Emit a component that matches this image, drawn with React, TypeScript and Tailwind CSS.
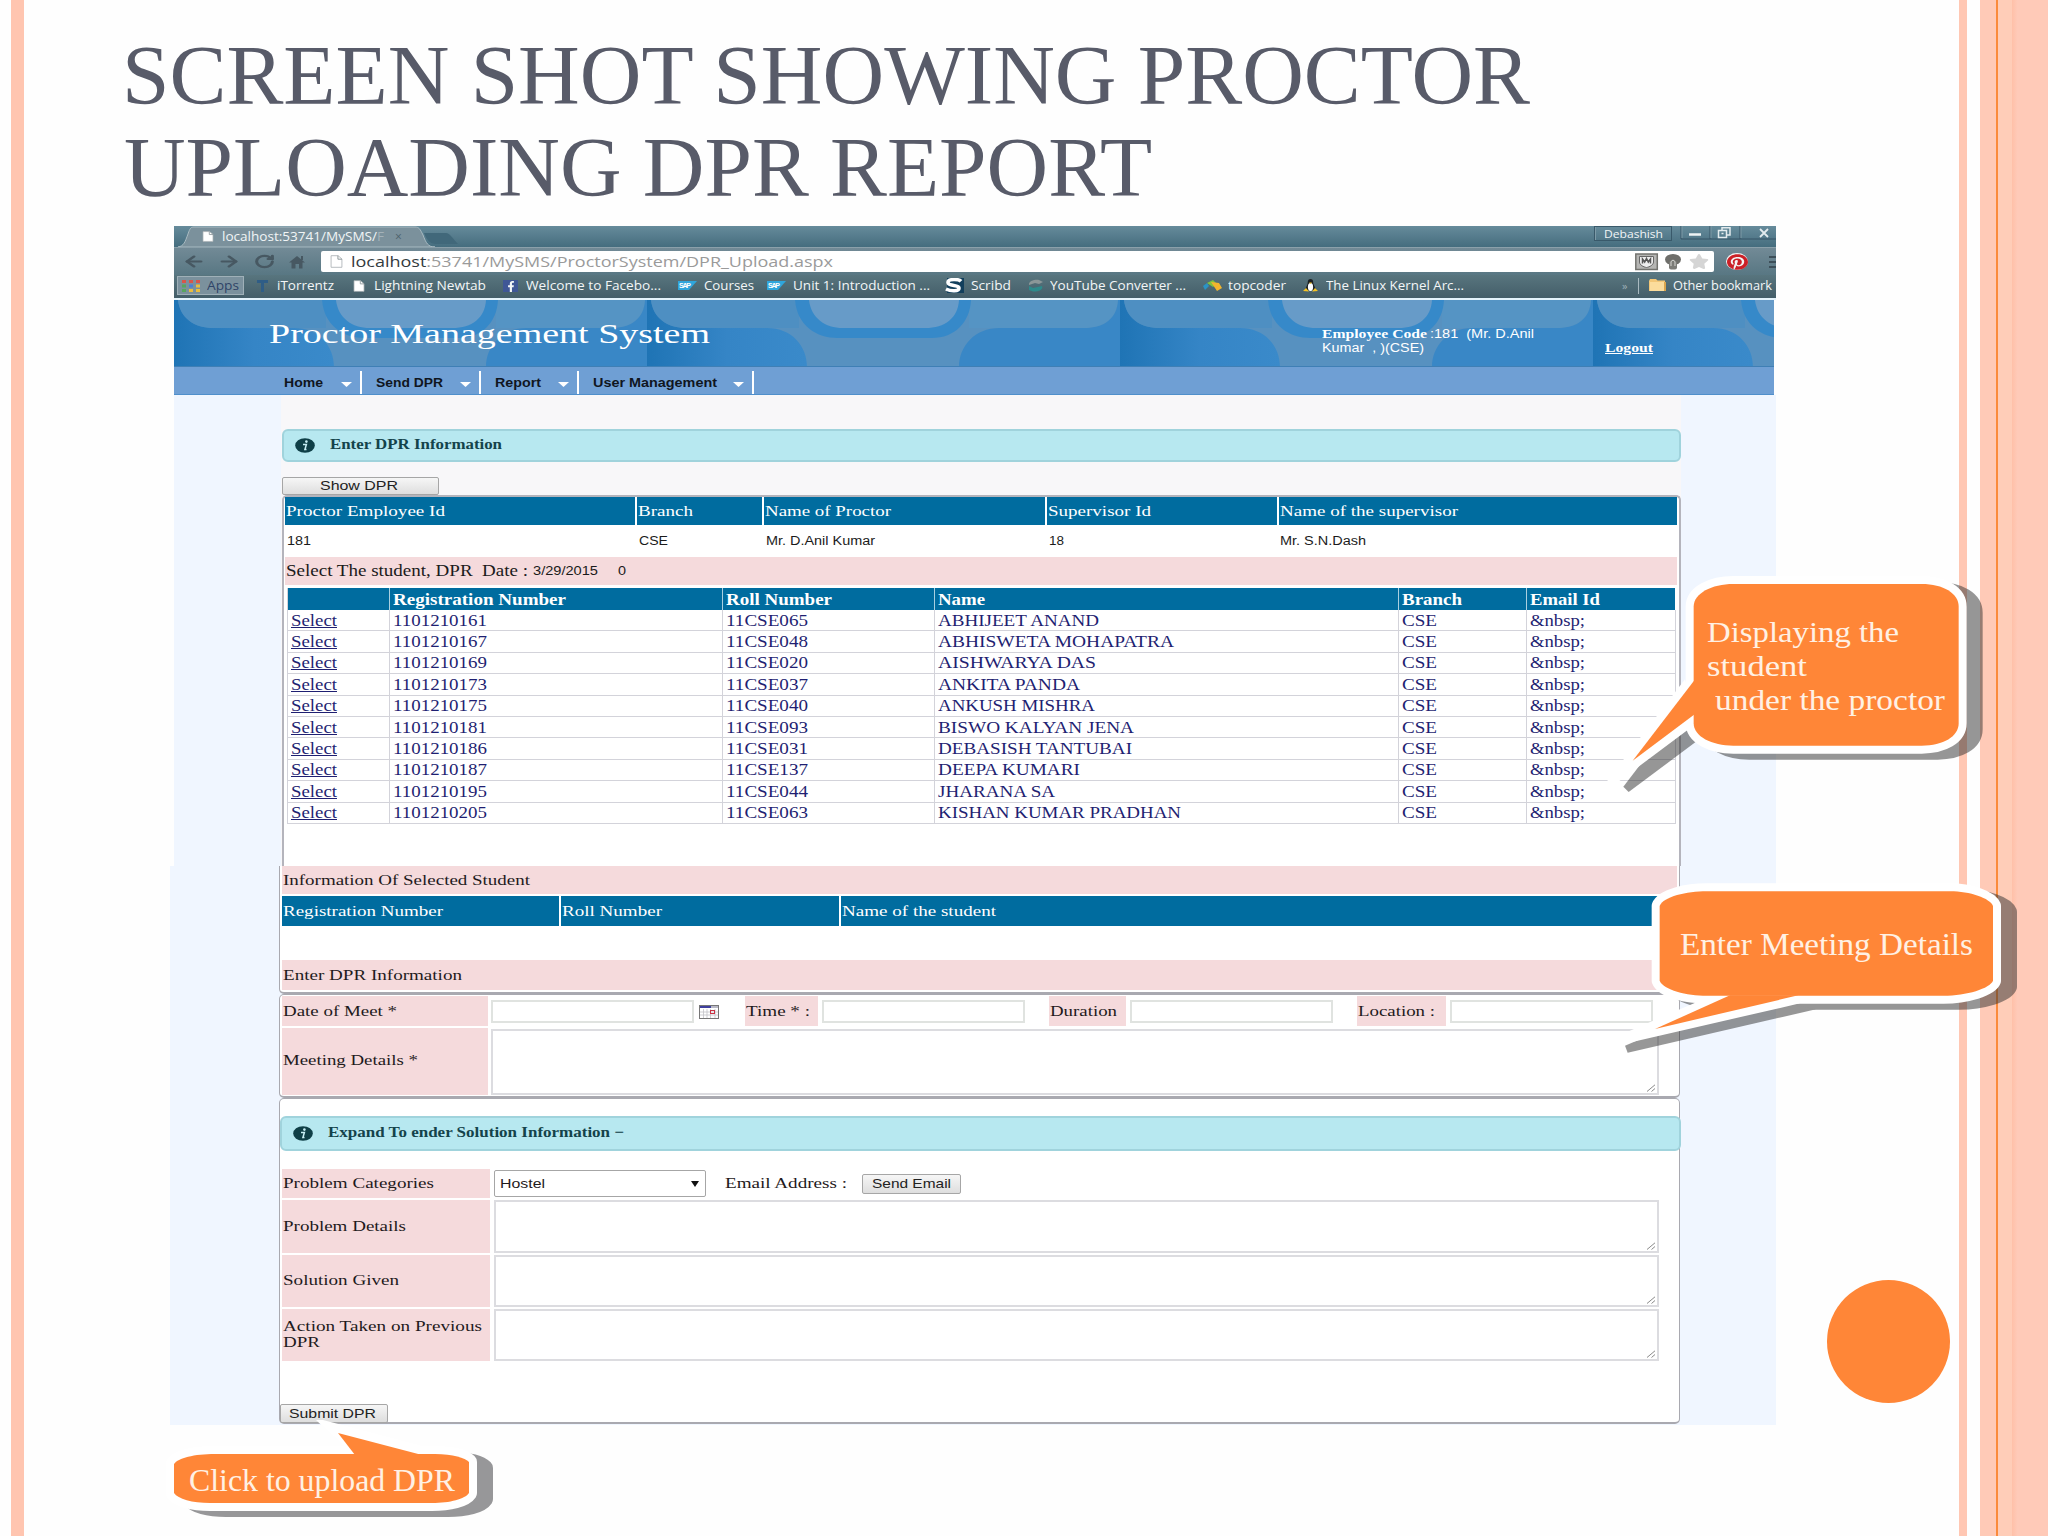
import { useLayoutEffect, useRef, useState } from 'react';
import type { ReactNode } from 'react';
import { FaPinterest, FaStar, FaFacebookF } from 'react-icons/fa';
import { ArrowLeft, ArrowRight, RotateCw } from 'lucide-react';

interface FitProps {
  className: string;
  children: ReactNode;
}

// One line of text stretched to the width of its box
function Fit({ className, children }: FitProps) {
  const box = useRef<HTMLSpanElement>(null);
  const text = useRef<HTMLSpanElement>(null);
  const [scale, setScale] = useState(1);

  useLayoutEffect(() => {
    if (!box.current || !text.current) return;
    text.current.style.transform = 'none';
    const natural = text.current.getBoundingClientRect().width;
    const next = box.current.getBoundingClientRect().width / natural;
    text.current.style.transform = `scaleX(${next})`;
    setScale(next);
  }, [children]);

  return (
    <span ref={box} className={`block shrink-0 whitespace-pre ${className}`}>
      <span ref={text} className="inline-block origin-left" style={{ transform: `scaleX(${scale})` }}>
        {children}
      </span>
    </span>
  );
}

const SERIF = "font-['Liberation_Serif',serif]";
const SANS = "font-['Liberation_Sans',sans-serif]";
const UI = "font-['Open_Sans',sans-serif]";

function PageIcon({ className }: { className: string }) {
  return (
    <svg viewBox="0 0 12 13" preserveAspectRatio="none" className={`shrink-0 ${className}`}>
      <path d="M1 .7h6.5L11 4v8.3H1z" fill="#fff" stroke="#a9b0b3" strokeWidth=".8" />
      <path d="M7.3.7V4.200H11" fill="none" stroke="#8b9599" strokeWidth=".9" />
    </svg>
  );
}

function SapIcon() {
  return (
    <svg viewBox="0 0 19 9" className="h-[9px] w-[19px] shrink-0">
      <path d="M0 0h19l-8 9H0z" fill="#2fa6dc" />
      <text x="1" y="7" fontSize="7" fontWeight="700" fill="#fff" fontFamily="Liberation Sans" textLength="12">SAP</text>
    </svg>
  );
}

function InfoIcon() {
  return (
    <svg viewBox="0 0 20 15" className="h-[15px] w-5 shrink-0">
      <ellipse cx="10" cy="7.500" rx="9.800" ry="7.300" fill="#0f3f47" />
      <circle cx="11.400" cy="3.600" r="1.300" fill="#c8eef4" />
      <path d="M8 6.400h3.400L9.900 11.600h1.600" fill="none" stroke="#c8eef4" strokeWidth="1.500" />
    </svg>
  );
}

function Resizer() {
  return (
    <svg viewBox="0 0 10 8" className="absolute right-px bottom-px h-2 w-[10px]">
      <path d="M1 7.500L9 .8M5.500 7.500L9 4.500" stroke="#8a8a8a" strokeWidth="1" fill="none" />
    </svg>
  );
}

function TabStrip() {
  return (
    <div className={`relative flex h-[21px] items-center bg-linear-to-b from-[#668b9b] to-[#456d7e] text-[12px] leading-none text-[#f1f5f6] ${UI}`}>
      <svg viewBox="0 0 290 21" className="absolute top-0 left-0 h-[21px] w-[290px]">
        <path d="M4 21C10 20 11 16 14 8C16 2 17 1 20 1H241C245 1 246 3 249 9C252 17 254 21 261 21z" fill="#7b919c" stroke="#a9bbc2" strokeWidth="1" />
        <path d="M250 7H272C276 7 279 13 284 18H262C256 18 253 14 250 7z" fill="#41687a" />
      </svg>
      <div className="relative flex w-full items-center">
        <PageIcon className="ml-[28px] h-[11px] w-[12px]" />
        <Fit className="ml-[8px] w-[162px]">localhost:53741/MySMS/<span className="text-[#a4b2b9]">F</span></Fit>
        <span className="ml-[11px] w-[9px] text-[12px] text-[#4d626c]">×</span>
        <div className="mb-[7px] ml-[1190px] flex h-[15px] w-[78px] shrink-0 items-center justify-center border border-[#39596a] shadow-[inset_1px_0_#7d9ba8]">
          <Fit className="w-[59px] text-[11px]">Debashish</Fit>
        </div>
        <svg viewBox="0 0 96 15" className="mb-[6px] ml-[8px] h-[15px] w-[96px] shrink-0">
          <path d="M1 0V13M30 0V13M60 0V13M1 13H96" stroke="#365566" fill="none" />
          <path d="M2 0V12M31 0V12M61 0V12" stroke="#7c99a6" fill="none" />
          <path d="M9 8.500H21" stroke="#eef3f5" strokeWidth="2.500" />
          <path d="M38.500 4.500h8v7h-8zM42 4V1.800h8V9H47M41.500 7.500h2" fill="none" stroke="#e3ebee" strokeWidth="1.500" />
          <path d="M80 3L88 11M88 3L80 11" stroke="#e3ebee" strokeWidth="1.800" />
        </svg>
      </div>
    </div>
  );
}

function AddressBar() {
  return (
    <div className={`flex h-[28px] items-center overflow-hidden border-t border-[#8ba0aa] bg-linear-to-b from-[#728a96] to-[#587783] text-[14.500px] leading-none ${UI}`}>
      <ArrowLeft className="ml-[8px] h-[17px] w-[24px] shrink-0 text-[#475862]" strokeWidth={3} preserveAspectRatio="none" />
      <ArrowRight className="ml-[11px] h-[17px] w-[24px] shrink-0 text-[#475862]" strokeWidth={3} preserveAspectRatio="none" />
      <RotateCw className="ml-[13px] h-[15px] w-[21px] shrink-0 text-[#475862]" strokeWidth={3.500} preserveAspectRatio="none" />
      <svg viewBox="0 0 18 14" className="ml-[13px] h-[14px] w-[18px] shrink-0">
        <path d="M1 7.500L9 1l8 6.500h-2.500V13.500H11V9H7.500v4.500H3.500V7.500z" fill="#475862" />
        <path d="M13 1h2v4h-2z" fill="#475862" />
      </svg>
      <div className="ml-[15px] flex h-[21px] w-[1393px] shrink-0 items-center rounded-[2px] bg-white">
        <PageIcon className="ml-[9px] h-[13px] w-[13px]" />
        <Fit className="mt-[2px] ml-[8px] w-[482px] text-[#9a9a9a]">
          <span className="text-[#333b40]">localhost</span>:53741/MySMS/ProctorSystem/DPR_Upload.aspx
        </Fit>
        <svg viewBox="0 0 76 18" className="mt-px ml-[802px] h-[18px] w-[76px] shrink-0">
          <rect x=".8" y="1" width="21.500" height="15.500" fill="#b5b5b3" stroke="#73736f" strokeWidth="1.500" />
          <path d="M4.500 3.500h14V9c0 3-4 5-7 5.500C8.500 14 4.500 12 4.500 9z" fill="#eee" stroke="#666" />
          <path d="M7.500 10.500V6l2.200 3L11.500 5.500 13.300 9l2.200-3v4.500" fill="none" stroke="#555" strokeWidth="1.500" />
          <ellipse cx="38" cy="6.500" rx="8" ry="5.500" fill="#6e6e6a" />
          <rect x="34" y="8" width="8" height="8.500" rx="2" fill="#7c7c78" />
          <path d="M36 13V8.500q2-3 4 0V13" fill="none" stroke="#d6d6d2" strokeWidth="1" />
        </svg>
        <FaStar className="-ml-[22px] h-[15px] w-[20px] shrink-0 text-[#d5d5d5]" preserveAspectRatio="none" />
      </div>
      <div className="ml-[12px] flex h-[17px] w-[22px] shrink-0 items-center justify-center rounded-[50%] bg-[#f4f4f4]">
        <FaPinterest className="h-[16px] w-[21px] text-[#cb2027]" preserveAspectRatio="none" />
      </div>
      <div className="ml-[21px] flex w-[14px] shrink-0 flex-col gap-[3px]">
        <i className="h-[2px] bg-[#3d4f59]" />
        <i className="h-[2px] bg-[#3d4f59]" />
        <i className="h-[2px] bg-[#3d4f59]" />
      </div>
    </div>
  );
}

function BookmarksBar() {
  return (
    <div className={`flex h-[23px] items-center overflow-hidden bg-linear-to-b from-[#58757e] to-[#445e69] pb-[2px] text-[12px] leading-none text-[#f3f6f7] ${UI}`}>
      <div className="ml-[3px] flex h-[19px] w-[67px] shrink-0 items-center border border-[#9fb0b8] bg-[#7b919d]">
        <svg viewBox="0 0 18 12" className="ml-[4px] h-[12px] w-[18px]">
          <path d="M0 0h4v3H0zM7 0h4v3H7zM14 0h4v3h-4z" fill="#d8564a" />
          <path d="M0 4.500h4v3H0zM0 9h4v3H0z" fill="#57a55e" />
          <path d="M7 4.500h4v3H7z" fill="#4b7fd6" />
          <path d="M14 4.500h4v3h-4zM7 9h4v3H7zM14 9h4v3h-4z" fill="#e9bd3f" />
        </svg>
        <Fit className="ml-[7px] w-[32px] text-[#2f4468]">Apps</Fit>
      </div>
      <svg viewBox="0 0 11 12" className="ml-[13px] h-3 w-[11px] shrink-0">
        <path d="M0 1.500h11M5.500 1.500V12" stroke="#2f5d86" strokeWidth="3" />
      </svg>
      <Fit className="ml-[9px] w-[57px]">iTorrentz</Fit>
      <PageIcon className="ml-[19px] h-[12px] w-[12px]" />
      <Fit className="ml-[9px] w-[112px]">Lightning Newtab</Fit>
      <span className="ml-[17px] flex h-[12px] w-[15px] shrink-0 items-end justify-center bg-[#3f5796]">
        <FaFacebookF className="h-[11px] w-[10px]" />
      </span>
      <Fit className="ml-[8px] w-[135px]">Welcome to Facebo...</Fit>
      <span className="ml-[17px]"><SapIcon /></span>
      <Fit className="ml-[7px] w-[50px]">Courses</Fit>
      <span className="ml-[13px]"><SapIcon /></span>
      <Fit className="ml-[7px] w-[137px]">Unit 1: Introduction ...</Fit>
      <svg viewBox="0 0 19 15" className="ml-[15px] h-[15px] w-[19px] shrink-0">
        <path d="M2 0h17v15H2z" fill="#123f5c" />
        <path d="M16 3.300C14 1 3 .5 3 4.500s11 2 11 5.500-8 3.500-13 1" fill="none" stroke="#fff" strokeWidth="3.600" />
      </svg>
      <Fit className="ml-[7px] w-[40px]">Scribd</Fit>
      <svg viewBox="0 0 16 13" className="ml-[17px] h-[13px] w-[16px] shrink-0">
        <path d="M1 6C0 1 9 0 11 1l4 2-4 2-4-1z" fill="#8b9798" />
        <path d="M1 7l4 2 9-2c2 4-5 6-9 5.500L1 11z" fill="#2e8a8b" />
      </svg>
      <Fit className="ml-[6px] w-[136px]">YouTube Converter ...</Fit>
      <svg viewBox="0 0 19 11" className="ml-[17px] h-[11px] w-[19px] shrink-0">
        <path d="M0 6l4-3 2 3-4 4z" fill="#2b93c4" />
        <path d="M4 3l6-3 4 4-4 3z" fill="#7fc241" />
        <path d="M8 2l8 1 3 5-5 3z" fill="#f3b52e" />
      </svg>
      <Fit className="ml-[6px] w-[58px]">topcoder</Fit>
      <svg viewBox="0 0 15 13" className="ml-[17px] h-[13px] w-[15px] shrink-0">
        <path d="M7.500 0c3 0 2.500 3 3 5l2.500 6H2l2.500-6c.5-2 0-5 3-5z" fill="#1c2023" />
        <ellipse cx="7.500" cy="8" rx="2.600" ry="4" fill="#fff" />
        <path d="M0 12l3-3 3 3.500zM15 12l-3-3-3 3.500zM6 3.500h3L7.500 5z" fill="#f5c324" />
      </svg>
      <Fit className="ml-[8px] w-[138px]">The Linux Kernel Arc...</Fit>
      <span className="ml-[158px] text-[11px] text-[#9eb0b7]">»</span>
      <i className="ml-[11px] h-[16px] w-px shrink-0 bg-[#a9bac1]" />
      <svg viewBox="0 0 18 13" className="ml-[10px] h-[13px] w-[18px] shrink-0">
        <path d="M0 2l1-2h6l1.500 1.500H16V12H0z" fill="#f3c777" />
        <path d="M1 3h14v9H1z" fill="#fbdc9c" />
        <path d="M15 3h2v9h-2z" fill="#d9a54e" />
      </svg>
      <Fit className="ml-[6px] w-[99px]">Other bookmark</Fit>
    </div>
  );
}

function Banner() {
  return (
    <div className="relative h-[67px] w-[1600px] overflow-hidden">
      <svg viewBox="0 0 1600 67" className="absolute inset-0 h-[67px] w-[1600px]">
        <defs>
          <linearGradient id="deep" x1="0" x2="1">
            <stop offset="0" stopColor="#1f74b5" />
            <stop offset=".5" stopColor="#3585c6" />
            <stop offset="1" stopColor="#3a8aca" />
          </linearGradient>
          <linearGradient id="pale" x1="0" x2="1">
            <stop offset="0" stopColor="#3f86bf" />
            <stop offset=".25" stopColor="#5791c0" />
            <stop offset=".8" stopColor="#5791c0" />
            <stop offset="1" stopColor="#3c86c0" />
          </linearGradient>
          <pattern id="tiles" width="473" height="67" patternUnits="userSpaceOnUse">
            <rect width="473" height="67" fill="url(#pale)" />
            <path d="M0 0H4C6 18 20 28 40 28H120C145 28 160 46 160 67H0z" fill="url(#deep)" />
            <path d="M471 0C470 18 458 28 436 28H352C328 28 312 46 312 67H473V0z" fill="#3987c6" />
            <path d="M4 0H152V28H40C20 28 6 18 4 0z" fill="#4e8fc2" />
            <path d="M322 0H471C470 18 458 28 436 28H322z" fill="#5594c4" />
            <path d="M148 0C150 26 170 38 190 38H285C308 38 323 22 324 0z" fill="#3689c9" />
            <path d="M162 0C164 18 178 28 196 28H278C298 28 311 18 312 0z" fill="#679bc8" />
          </pattern>
        </defs>
        <rect width="1600" height="67" fill="url(#tiles)" />
        <path d="M0 66.500H1600" stroke="#3f7fb5" />
      </svg>
      <div className={`relative flex items-start text-white ${SERIF}`}>
        <Fit className="mt-[17px] ml-[95px] w-[441px] text-[27.500px] leading-[33px]">Proctor Management System</Fit>
        <div className="mt-[27px] ml-[612px] w-[283px] text-[13.500px] leading-[14px]">
          <div className="flex">
            <Fit className="w-[105px] font-semibold">Employee Code</Fit>
            <Fit className={`ml-[3px] w-[104px] text-[12.500px] ${SANS}`}>:181  (Mr. D.Anil</Fit>
          </div>
          <Fit className={`w-[102px] text-[12.500px] ${SANS}`}>Kumar  , )(CSE)</Fit>
        </div>
        <Fit className="mt-[41px] w-[48px] text-[13.500px] leading-[14px] font-bold"><u>Logout</u></Fit>
      </div>
    </div>
  );
}

const MENU = [
  { label: 'Home', box: 'pl-[16px] w-[94px]', text: 'w-[39px]' },
  { label: 'Send DPR', box: 'pl-[14px] w-[119px]', text: 'w-[67px]' },
  { label: 'Report', box: 'pl-[14px] w-[98px]', text: 'w-[46px]' },
  { label: 'User Management', box: 'pl-[14px] w-[175px]', text: 'w-[124px]' },
];

function MenuBar() {
  return (
    <div className={`flex h-[28px] w-[1600px] items-end border-b border-[#4f8fcb] bg-[#6f9fd4] pl-[94px] text-[12.500px] leading-none font-bold text-[#10161f] ${SANS}`}>
      {MENU.map((item) => (
        <div key={item.label} className={`flex h-[23px] items-center justify-between border-r-2 border-white pt-[2px] pr-[8px] ${item.box}`}>
          <Fit className={item.text}>{item.label}</Fit>
          <svg viewBox="0 0 11 5" className="mt-px h-[5px] w-[11px]"><path d="M0 0h11L5.500 5z" fill="#fff" /></svg>
        </div>
      ))}
    </div>
  );
}

const STUDENTS = [
  { reg: '1101210161', roll: '11CSE065', name: 'ABHIJEET ANAND', width: 'w-[161px]' },
  { reg: '1101210167', roll: '11CSE048', name: 'ABHISWETA MOHAPATRA', width: 'w-[236px]' },
  { reg: '1101210169', roll: '11CSE020', name: 'AISHWARYA DAS', width: 'w-[158px]' },
  { reg: '1101210173', roll: '11CSE037', name: 'ANKITA PANDA', width: 'w-[142px]' },
  { reg: '1101210175', roll: '11CSE040', name: 'ANKUSH MISHRA', width: 'w-[157px]' },
  { reg: '1101210181', roll: '11CSE093', name: 'BISWO KALYAN JENA', width: 'w-[196px]' },
  { reg: '1101210186', roll: '11CSE031', name: 'DEBASISH TANTUBAI', width: 'w-[194px]' },
  { reg: '1101210187', roll: '11CSE137', name: 'DEEPA KUMARI', width: 'w-[142px]' },
  { reg: '1101210195', roll: '11CSE044', name: 'JHARANA SA', width: 'w-[117px]' },
  { reg: '1101210205', roll: '11CSE063', name: 'KISHAN KUMAR PRADHAN', width: 'w-[243px]' },
];

const GRID = 'grid grid-cols-[102px_333px_212px_464px_128px_149px]';
const CELL = 'flex items-center border-r border-b border-[#d3d3da] pt-px pl-[3px]';
const HEAD = 'flex items-center border-r border-[#a9cfe0] pt-px pl-[3px]';

function StudentGrid() {
  return (
    <div className="mt-[3px] ml-[2px] w-[1388px] border-l border-[#d3d3da] text-[16px] leading-none text-[#1f1f72]">
      <div className={`${GRID} h-[22px] bg-[#006c9f] font-bold text-white`}>
        <div className={HEAD} />
        <div className={HEAD}><Fit className="w-[173px]">Registration Number</Fit></div>
        <div className={HEAD}><Fit className="w-[106px]">Roll Number</Fit></div>
        <div className={HEAD}><Fit className="w-[47px]">Name</Fit></div>
        <div className={HEAD}><Fit className="w-[60px]">Branch</Fit></div>
        <div className="flex items-center pt-px pl-[3px]"><Fit className="w-[70px]">Email Id</Fit></div>
      </div>
      {STUDENTS.map((s) => (
        <div key={s.reg} className={`${GRID} h-[21.400px]`}>
          <div className={CELL}><Fit className="w-[46px]"><u>Select</u></Fit></div>
          <div className={CELL}><Fit className="w-[94px]">{s.reg}</Fit></div>
          <div className={CELL}><Fit className="w-[82px]">{s.roll}</Fit></div>
          <div className={CELL}><Fit className={s.width}>{s.name}</Fit></div>
          <div className={CELL}><Fit className="w-[35px]">CSE</Fit></div>
          <div className={CELL}><Fit className="w-[55px]">{'&nbsp;'}</Fit></div>
        </div>
      ))}
    </div>
  );
}

const TH = 'flex items-center bg-[#006c9f] pl-px text-white';
const PINK = 'flex items-center bg-[#f5dadc] pb-px pl-px';
const INPUT = 'h-[23px] w-[203px] border-2 border-[#e0e3e0] bg-white';
const AREA = 'relative border-2 border-[#dcdce0] bg-white';
const BUTTON = 'flex items-center justify-center rounded-[2px] border border-[#a6a6a6] bg-linear-to-b from-[#f6f6f6] to-[#dedede] text-[#222]';

function ProctorPanel() {
  return (
    <div className="h-[471px] bg-[#f0f6ff] pl-[107px]">
      <div className="flex h-[471px] w-[1400px] flex-col bg-[#f8f7f9] pt-[34px] pl-px">
        <div className="flex h-[33px] w-[1399px] items-center rounded-[6px] border-2 border-[#a0d3dc] bg-[#b7e8f0] pl-[11px] text-[15px] leading-none font-bold text-[#14434b]">
          <InfoIcon />
          <Fit className="mb-[2px] ml-[15px] w-[172px]">Enter DPR Information</Fit>
        </div>
        <div className={`mt-[15px] h-[18px] w-[157px] pr-[3px] text-[13.500px] leading-none ${BUTTON} ${SANS}`}>
          <Fit className="w-[78px]">Show DPR</Fit>
        </div>
        <div className="h-[371px] w-[1399px] rounded-t-[5px] border-x-2 border-t-2 border-[#b4b4bc] bg-white pl-px leading-none text-[#1b1b1b]">
          <div className="grid h-[28px] w-[1392px] grid-cols-[350px_125px_281px_230px_398px] gap-[2px] text-[15.500px]">
            <div className={TH}><Fit className="w-[159px]">Proctor Employee Id</Fit></div>
            <div className={TH}><Fit className="w-[55px]">Branch</Fit></div>
            <div className={TH}><Fit className="w-[126px]">Name of Proctor</Fit></div>
            <div className={TH}><Fit className="w-[103px]">Supervisor Id</Fit></div>
            <div className={TH}><Fit className="w-[178px]">Name of the supervisor</Fit></div>
          </div>
          <div className={`grid h-[32px] w-[1392px] grid-cols-[350px_125px_281px_230px_398px] items-center gap-[2px] text-[12.500px] ${SANS}`}>
            <Fit className="mt-px ml-[2px] w-[24px]">181</Fit>
            <Fit className="ml-[2px] w-[29px]">CSE</Fit>
            <Fit className="ml-[2px] w-[109px]">Mr. D.Anil Kumar</Fit>
            <Fit className="ml-[2px] w-[15px]">18</Fit>
            <Fit className="ml-px w-[86px]">Mr. S.N.Dash</Fit>
          </div>
          <div className="flex h-[28px] w-[1392px] items-center bg-[#f5dadc] pl-px">
            <Fit className="w-[242px] text-[16px]">Select The student, DPR  Date :</Fit>
            <Fit className={`mt-px ml-[5px] w-[65px] text-[12.500px] ${SANS}`}>3/29/2015</Fit>
            <Fit className={`mt-px ml-[20px] w-[8px] text-[12.500px] ${SANS}`}>0</Fit>
          </div>
          <StudentGrid />
        </div>
      </div>
    </div>
  );
}

const SOLUTION_ROWS = [
  { row: 'h-[53px]', lines: [{ text: 'Problem Details', width: 'w-[123px]' }] },
  { row: 'h-[52px]', lines: [{ text: 'Solution Given', width: 'w-[116px]' }] },
  { row: 'h-[52px]', lines: [{ text: 'Action Taken on Previous', width: 'w-[199px]' }, { text: 'DPR', width: 'w-[37px]' }] },
];

function MeetingPanel() {
  return (
    <div className="-ml-[4px] h-[559px] w-[1606px] bg-[#f0f6ff] pl-[109px] text-[15.500px] leading-none text-[#1f1a1c]">
      <div className="h-[128px] w-[1401px] rounded-b-[5px] border-x border-b-2 border-[#a9a9b0] bg-white pl-[2px]">
        <div className={`h-[28px] w-[1395px] ${PINK}`}><Fit className="w-[247px]">Information Of Selected Student</Fit></div>
        <div className="mt-[2px] grid h-[30px] w-[1395px] grid-cols-[277px_278px_836px] gap-[2px]">
          <div className={TH}><Fit className="mb-px w-[160px]">Registration Number</Fit></div>
          <div className={TH}><Fit className="mb-px w-[100px]">Roll Number</Fit></div>
          <div className={TH}><Fit className="mb-px w-[154px]">Name of the student</Fit></div>
        </div>
        <div className={`mt-[34px] h-[30px] w-[1395px] ${PINK}`}><Fit className="w-[179px]">Enter DPR Information</Fit></div>
      </div>

      <div className="h-[104px] w-[1401px] rounded-[5px] border border-b-2 border-[#a9a9b0] bg-white pt-px pl-[2px]">
        <div className="flex h-[30px] items-center">
          <div className={`h-full w-[206px] ${PINK}`}><Fit className="w-[114px]">Date of Meet *</Fit></div>
          <div className={`ml-[3px] ${INPUT}`} />
          <svg viewBox="0 0 20 14" className="mt-[2px] ml-[5px] h-[14px] w-[20px]">
            <rect x=".5" y=".5" width="19" height="13" fill="#fff" stroke="#777" />
            <path d="M1 2H12" stroke="#3f3f9e" strokeWidth="2" />
            <path d="M12 2H19" stroke="#b9b9c6" strokeWidth="2" />
            <path d="M4.500 4V13M8 4V13M11.500 4V13M16 4V13M1 7H19M1 10H19" stroke="#c3c3c8" strokeWidth=".8" />
            <rect x="11.500" y="5.500" width="4" height="3" fill="none" stroke="#cc3344" strokeWidth="1" />
          </svg>
          <div className={`ml-[26px] h-full w-[73px] ${PINK}`}><Fit className="w-[64px]">Time * :</Fit></div>
          <div className={`ml-[4px] ${INPUT}`} />
          <div className={`ml-[24px] h-full w-[77px] ${PINK}`}><Fit className="w-[67px]">Duration</Fit></div>
          <div className={`ml-[4px] ${INPUT}`} />
          <div className={`ml-[24px] h-full w-[89px] ${PINK}`}><Fit className="w-[77px]">Location :</Fit></div>
          <div className={`ml-[4px] ${INPUT}`} />
        </div>
        <div className="mt-[2px] flex h-[67px] gap-[3px]">
          <div className={`w-[206px] ${PINK}`}><Fit className="mb-[2px] w-[135px]">Meeting Details *</Fit></div>
          <div className={`mt-px w-[1168px] ${AREA}`}><Resizer /></div>
        </div>
      </div>

      <div className="h-[326px] w-[1401px] rounded-[5px] border border-b-2 border-[#a9a9b0] bg-white pt-[17px]">
        <div className="flex h-[35px] w-[1401px] items-center rounded-[6px] border-2 border-[#a0d3dc] bg-[#b7e8f0] pl-[11px] text-[15px] font-bold text-[#14434b]">
          <InfoIcon />
          <Fit className="mb-[2px] ml-[15px] w-[296px]">Expand To ender Solution Information −</Fit>
        </div>
        <div className="mt-[18px] flex flex-col gap-[2px] pl-[2px]">
          <div className="flex h-[29px] items-center">
            <div className={`h-full w-[208px] ${PINK}`}><Fit className="w-[151px]">Problem Categories</Fit></div>
            <div className={`ml-[4px] flex h-[27px] w-[212px] items-center justify-between rounded-[2px] border border-[#a6a6a6] bg-white pr-[6px] pl-[5px] text-[13.500px] ${SANS}`}>
              <Fit className="w-[45px]">Hostel</Fit>
              <svg viewBox="0 0 8 6" className="h-[6px] w-[8px]"><path d="M0 0h8L4 6z" fill="#111" /></svg>
            </div>
            <Fit className="mb-px ml-[19px] w-[122px]">Email Address :</Fit>
            <div className={`ml-[15px] h-[20px] w-[99px] text-[13px] ${BUTTON} ${SANS}`}><Fit className="w-[79px]">Send Email</Fit></div>
          </div>
          {SOLUTION_ROWS.map((item) => (
            <div key={item.lines[0].text} className={`flex gap-[4px] ${item.row}`}>
              <div className="flex w-[208px] flex-col justify-center bg-[#f5dadc] pb-[2px] pl-px">
                {item.lines.map((line) => (
                  <Fit key={line.text} className={`leading-[16px] ${line.width}`}>{line.text}</Fit>
                ))}
              </div>
              <div className={`w-[1165px] ${AREA}`}><Resizer /></div>
            </div>
          ))}
        </div>
        <div className={`mt-[43px] h-[19px] w-[108px] pr-[3px] text-[13.500px] ${BUTTON} ${SANS}`}><Fit className="w-[87px]">Submit DPR</Fit></div>
      </div>
    </div>
  );
}

const STUDENT_BOX = 'M401 140C401 100 455 72 520 72H1085C1150 72 1196 100 1196 140V490C1196 530 1150 557 1085 557H520C455 557 401 530 401 490Z';
const STUDENT_POINTER = 'M402 362L218 602L402 464Z';
const STUDENT_TAIL = 'M375 358L142 662L158 678L410 490Z';
const MEETING_BOX = 'M299 1038C310 1010 380 994 440 994H1170C1230 994 1290 1015 1299 1038V1262C1290 1285 1220 1307 1150 1307H440C380 1307 310 1290 299 1262Z';
const MEETING_POINTER = 'M510 1306L285 1407L715 1306Z';
const MEETING_TAIL = 'M495 1290L147 1439L155 1460L720 1330Z';
const UPLOAD_BOX = 'M14 62C18 56 34 52 55 52H275C293 52 305 56 309 60V91C305 97 290 101 272 101H50C32 101 18 97 14 91Z';
const UPLOAD_POINTER = 'M195 53L178 31L262 53Z';
const UPLOAD_TAIL = 'M188 48L156 18L163 18L270 46Z';

function Callouts() {
  return (
    <div className={`leading-[34px] text-[#fff1e4] ${SERIF}`}>
      <svg viewBox="0 0 1464 1500" className="absolute top-[560px] left-[1560px] h-[500px] w-[488px]">
        <g strokeWidth="48" strokeLinejoin="round">
          <g transform="translate(48 18)" opacity=".5" fill="#303030" stroke="#303030">
            <path d={STUDENT_BOX} />
            <path d={STUDENT_TAIL} strokeWidth="0" />
            <path d={MEETING_BOX} />
            <path d={MEETING_TAIL} strokeWidth="0" />
          </g>
          <path d={STUDENT_BOX} fill="#fff" stroke="#fff" />
          <path d={STUDENT_TAIL} fill="#fff" />
          <path d={MEETING_BOX} fill="#fff" stroke="#fff" />
          <path d={MEETING_TAIL} fill="#fff" />
        </g>
        <g fill="#ff8637">
          <path d={STUDENT_BOX} />
          <path d={STUDENT_POINTER} />
          <path d={MEETING_BOX} />
          <path d={MEETING_POINTER} />
        </g>
      </svg>
      <div className="absolute top-[615px] left-[1707px] text-[30px]">
        <Fit className="w-[192px]">Displaying the</Fit>
        <Fit className="w-[100px]">student</Fit>
        <Fit className="ml-[8px] w-[230px]">under the proctor</Fit>
      </div>
      <div className="absolute top-[928px] left-[1680px] text-[30.500px]">
        <Fit className="w-[293px]">Enter Meeting Details</Fit>
      </div>

      <svg viewBox="0 0 350 125" className="absolute top-[1402px] left-[160px] h-[125px] w-[350px]">
        <g strokeWidth="16" strokeLinejoin="round">
          <path d={UPLOAD_BOX} transform="translate(16 6)" fill="#979799" stroke="#979799" />
          <path d={UPLOAD_BOX} fill="#fff" stroke="#fff" />
        </g>
        <g fill="#fff"><path d={UPLOAD_TAIL} /></g>
        <g fill="#ff8637">
          <path d={UPLOAD_BOX} />
          <path d={UPLOAD_POINTER} />
        </g>
      </svg>
      <div className="absolute top-[1464px] left-[189px] text-[31px]">
        <Fit className="w-[266px]">Click to upload DPR</Fit>
      </div>
    </div>
  );
}

export default function App() {
  return (
    <div className="relative flex h-[1536px] w-[2048px] overflow-hidden bg-[#fefefe]">
      <div className="ml-[11px] w-[13px] shrink-0 bg-[#ffc5b0]" />
      <main className="w-[1935px] shrink-0 pt-[30px]">
        <h1 className={`h-[184px] pl-[98px] text-[84px] leading-[92px] text-[#585b69] ${SERIF}`}>
          <Fit className="w-[1408px]">SCREEN SHOT SHOWING PROCTOR</Fit>
          <Fit className="ml-[2px] w-[1028px]">UPLOADING DPR REPORT</Fit>
        </h1>
        <div className={`mt-3 ml-[150px] w-[1602px] ${SERIF}`}>
          <TabStrip />
          <AddressBar />
          <BookmarksBar />
          <div className="h-[2px] bg-[#e4f3fb]" />
          <Banner />
          <MenuBar />
          <ProctorPanel />
          <MeetingPanel />
        </div>
      </main>
      <div className="w-[8px] shrink-0 bg-[#ffc7b3]" />
      <div className="ml-[13px] w-[16px] shrink-0 bg-[#ffcab7]" />
      <div className="w-[2px] shrink-0 bg-[#fb8b3c]" />
      <div className="w-[14px] shrink-0 bg-[#ffcdb8]" />
      <div className="w-[36px] shrink-0 bg-linear-to-r from-[#ffc0a8] to-[#ffcab8] to-15%" />
      <div className="absolute top-[1280px] left-[1827px] h-[123px] w-[123px] rounded-full bg-[#ff8637]" />
      <Callouts />
    </div>
  );
}
